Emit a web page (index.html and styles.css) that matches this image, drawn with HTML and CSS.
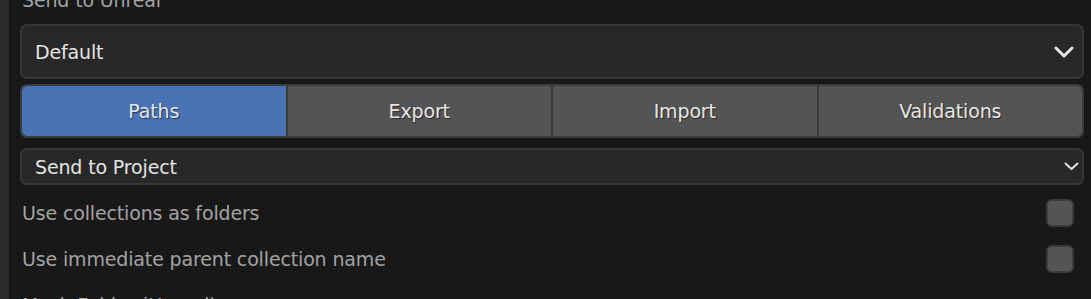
FILE: index.html
```html
<!DOCTYPE html>
<html>

<head>
    <link rel="stylesheet" href="styles.css">
</head>

<body>
    <div class="strip"></div>
    <div class="panel">
        <div class="panel-title">Send to Unreal</div>

        <div class="dropdown dropdown-large">
            <span>Default</span>
            <svg class="chevron" width="20" height="12" viewBox="0 0 20 12">
                <path d="M2 2 L10 10 L18 2" fill="none" stroke="#e6e6e6" stroke-width="3" stroke-linecap="round" stroke-linejoin="round"/>
            </svg>
        </div>

        <div class="tabs">
            <div class="tab active">Paths</div>
            <div class="tab">Export</div>
            <div class="tab">Import</div>
            <div class="tab">Validations</div>
        </div>

        <div class="dropdown dropdown-small">
            <span>Send to Project</span>
            <svg class="chevron" width="15" height="9" viewBox="0 0 15 9">
                <path d="M1.5 1.5 L7.5 7 L13.5 1.5" fill="none" stroke="#e6e6e6" stroke-width="2" stroke-linecap="round" stroke-linejoin="round"/>
            </svg>
        </div>

        <div class="option">
            <span>Use collections as folders</span>
            <div class="checkbox"></div>
        </div>
        <div class="option">
            <span>Use immediate parent collection name</span>
            <div class="checkbox"></div>
        </div>
        <div class="option">
            <span>Mesh Folder (Unreal)</span>
        </div>
    </div>
</body>

</html>
```

FILE: styles.css
```css
body {
    margin: 0;
    height: 299px;
    overflow: hidden;
    display: flex;
    font-family: "DejaVu Sans", sans-serif;
    font-size: 19px;
    letter-spacing: -0.15px;
    background-color: #181818;
}

.strip {
    width: 9px;
    flex-shrink: 0;
    background-color: #2a2a2a;
    border-right: 2px solid #141414;
}

.panel {
    flex: 1;
    padding: 0 7px 0 9px;
}

.panel-title {
    color: #a3a3a3;
    line-height: 20px;
    margin: -10px 0 14px 2px;
}

.dropdown {
    display: flex;
    align-items: center;
    justify-content: space-between;
    background-color: #282828;
    border: 2px solid #373737;
    border-radius: 7px;
    color: #e4e4e4;
    padding: 0 8px 0 13px;
}

.dropdown-large {
    height: 51px;
}

.dropdown-small {
    height: 33px;
    margin-top: 10px;
    padding-right: 3px;
}

.chevron {
    display: block;
}

.tabs {
    display: grid;
    grid-template-columns: repeat(4, 1fr);
    gap: 2px;
    margin-top: 5px;
    height: 50px;
    border: 2px solid #3b3b3b;
    border-radius: 7px;
    background-color: #3b3b3b;
    overflow: hidden;
}

.tab {
    display: flex;
    align-items: center;
    justify-content: center;
    background-color: #545454;
    color: #e6e6e6;
    text-shadow: 1px 1px 1px rgba(0, 0, 0, 0.5);
}

.tab.active {
    background-color: #4772b3;
}

.option {
    display: flex;
    align-items: center;
    justify-content: space-between;
    height: 46px;
    padding: 0 10px 0 2px;
    color: #a3a3a3;
}

.dropdown-small + .option {
    margin-top: 5px;
}

.checkbox {
    width: 24px;
    height: 24px;
    background-color: #545454;
    border: 2px solid #3b3b3b;
    border-radius: 6px;
}
```
